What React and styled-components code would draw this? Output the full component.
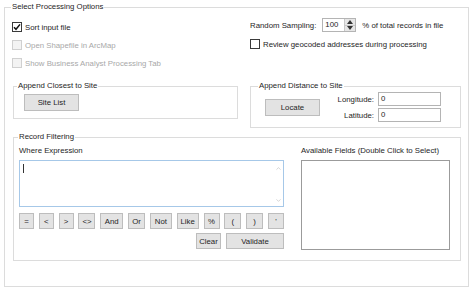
import React from 'react';
import styled, { createGlobalStyle } from 'styled-components';
import { ChevronUp, ChevronDown } from 'lucide-react';

const GlobalStyle = createGlobalStyle`
  html, body {
    margin: 0;
    background: #fff;
  }
  body {
    font-family: "Liberation Sans", Arial, sans-serif;
    font-size: 7.8px;
    color: #1e1e1e;
  }
`;

const Page = styled.div`
  width: 474px;
  height: 289px;
  padding: 2px 0 0 4px;
  box-sizing: border-box;
  overflow: hidden;
`;

const Group = styled.fieldset`
  margin: 0;
  padding: 0;
  border: 1px solid #dcdcdc;
  min-width: 0;
  box-sizing: border-box;
  width: ${p => p.$w}px;
  height: ${p => (p.$h ? `${p.$h}px` : 'auto')};
`;

const Legend = styled.legend`
  padding: 0 1px;
  margin-left: ${p => p.$offset}px;
  line-height: 10px;
  font-size: 7.8px;
  color: #1e1e1e;
`;

const GroupBody = styled.div`
  padding: ${p => p.$pad};
`;

const TopSection = styled.div`
  display: grid;
  grid-template-columns: 237px 1fr;
  height: 69px;
`;

const Column = styled.div`
  display: flex;
  flex-direction: column;
  gap: ${p => p.$gap || 0}px;
  padding-top: ${p => p.$top}px;
  margin-left: ${p => p.$left || 0}px;
`;

const Row = styled.label`
  display: flex;
  align-items: center;
  height: 18px;
  gap: ${p => p.$gap || 3}px;
  color: ${p => (p.$disabled ? '#a8a8a8' : '#1e1e1e')};
  white-space: nowrap;
`;

const Box = styled.span`
  width: 10px;
  height: 10px;
  box-sizing: border-box;
  border: 1px solid ${p => (p.$disabled ? '#d0d0d0' : '#3a3a3a')};
  background: ${p => (p.$disabled ? '#f3f3f3' : '#fff')};
  display: flex;
  align-items: center;
  justify-content: center;
`;

const CheckBox = ({ checked, disabled }) => (
  <Box $disabled={disabled}>
    {checked && (
      <svg width="8" height="8" viewBox="0 0 8 8">
        <path d="M1 4.2 L3 6.3 L7 1.4" fill="none" stroke="#111" strokeWidth="1.5" />
      </svg>
    )}
  </Box>
);

const Spin = styled.div`
  display: flex;
  width: 34px;
  height: 14px;
  box-sizing: border-box;
  border: 1px solid #b4b4b4;
  margin: 0 3px 0 3px;
`;

const SpinValue = styled.span`
  flex: 1;
  padding-left: 2px;
  line-height: 12px;
`;

const SpinArrows = styled.span`
  width: 10px;
  display: flex;
  flex-direction: column;
  background: #e6e6e6;
  border-left: 1px solid #c8c8c8;
`;

const Arrow = styled.span`
  flex: 1;
  display: flex;
  align-items: center;
  justify-content: center;
  border-bottom: ${p => (p.$top ? '1px solid #c8c8c8' : 'none')};
`;

const GroupsRow = styled.div`
  display: flex;
  align-items: flex-start;
  gap: 12px;
`;

const Button = styled.button`
  width: ${p => p.$w}px;
  height: ${p => p.$h || 16}px;
  padding: 0;
  box-sizing: border-box;
  border: 1px solid #bdbdbd;
  background: #e3e3e3;
  font-family: inherit;
  font-size: 7.8px;
  color: #1e1e1e;
  flex: none;
`;

const DistanceBody = styled.div`
  display: flex;
  align-items: center;
  padding: 1px 0 5px 14px;
`;

const CoordGrid = styled.div`
  display: grid;
  grid-template-columns: 52px 63px;
  column-gap: 4px;
  row-gap: 2px;
  margin-left: 2px;
  align-items: center;
`;

const CoordLabel = styled.span`
  text-align: right;
`;

const TextField = styled.div`
  height: 14px;
  box-sizing: border-box;
  border: 1px solid #b4b4b4;
  padding-left: 2px;
  line-height: 12px;
`;

const FilterBody = styled.div`
  display: flex;
  gap: 17px;
  padding: 4px 10px 10px 5px;
`;

const FieldLabel = styled.div`
  line-height: 10px;
  margin-bottom: 4px;
  white-space: nowrap;
`;

const ExprBox = styled.div`
  display: flex;
  height: 47px;
  box-sizing: border-box;
  border: 1px solid #a6c8e8;
  background: #fff;
`;

const ExprText = styled.div`
  flex: 1;
  padding: 3px 0 0 3px;
`;

const Caret = styled.span`
  display: block;
  width: 1px;
  height: 9px;
  background: #333;
`;

const ScrollBar = styled.div`
  width: 10px;
  display: flex;
  flex-direction: column;
  justify-content: space-between;
  align-items: center;
  padding: 4px 0 2px;
  color: #b8b8b8;
`;

const OperatorRow = styled.div`
  display: flex;
  justify-content: space-between;
  margin-top: 6px;
`;

const ActionRow = styled.div`
  display: flex;
  justify-content: flex-end;
  gap: 5px;
  margin-top: 4px;
`;

const ListBox = styled.div`
  width: 149px;
  height: 90px;
  box-sizing: border-box;
  border: 1px solid #9b9b9b;
  background: #fff;
`;

const operators = [
  ['=', 15], ['<', 15], ['>', 15], ['<>', 17], ['And', 23], ['Or', 17],
  ['Not', 22], ['Like', 22], ['%', 16], ['(', 17], [')', 17], ["'", 16],
];

export default function App() {
  return (
    <Page>
      <GlobalStyle />
      <Group $w={465} $h={285}>
        <Legend $offset={6}>Select Processing Options</Legend>
        <GroupBody $pad="0 0 0 8px">
          <TopSection>
            <Column $top={6} $left={-1}>
              <Row>
                <CheckBox checked />
                Sort input file
              </Row>
              <Row $disabled>
                <CheckBox disabled />
                Open Shapefile in ArcMap
              </Row>
              <Row $disabled>
                <CheckBox disabled />
                Show Business Analyst Processing Tab
              </Row>
            </Column>
            <Column $top={4} $gap={1}>
              <Row $gap={0}>
                Random Sampling:
                <Spin>
                  <SpinValue>100</SpinValue>
                  <SpinArrows>
                    <Arrow $top>
                      <svg width="6" height="4" viewBox="0 0 6 4"><path d="M0 4 L3 0 L6 4 Z" fill="#333" /></svg>
                    </Arrow>
                    <Arrow>
                      <svg width="6" height="4" viewBox="0 0 6 4"><path d="M0 0 L3 4 L6 0 Z" fill="#333" /></svg>
                    </Arrow>
                  </SpinArrows>
                </Spin>
                % of total records in file
              </Row>
              <Row>
                <CheckBox />
                Review geocoded addresses during processing
              </Row>
            </Column>
          </TopSection>

          <GroupsRow>
            <Group $w={225}>
              <Legend $offset={3}>Append Closest to Site</Legend>
              <GroupBody $pad="3px 0 7px 10px">
                <Button $w={55} $h={17}>Site List</Button>
              </GroupBody>
            </Group>
            <Group $w={211}>
              <Legend $offset={7}>Append Distance to Site</Legend>
              <DistanceBody>
                <Button $w={55} $h={17}>Locate</Button>
                <CoordGrid>
                  <CoordLabel>Longitude:</CoordLabel>
                  <TextField>0</TextField>
                  <CoordLabel>Latitude:</CoordLabel>
                  <TextField>0</TextField>
                </CoordGrid>
              </DistanceBody>
            </Group>
          </GroupsRow>

          <Group $w={448} style={{ marginTop: 4 }}>
            <Legend $offset={4}>Record Filtering</Legend>
            <FilterBody>
              <div style={{ width: 265 }}>
                <FieldLabel>Where Expression</FieldLabel>
                <ExprBox>
                  <ExprText>
                    <Caret />
                  </ExprText>
                  <ScrollBar>
                    <ChevronUp size={7} strokeWidth={2} />
                    <ChevronDown size={7} strokeWidth={2} />
                  </ScrollBar>
                </ExprBox>
                <OperatorRow>
                  {operators.map(([label, w]) => (
                    <Button key={label} $w={w}>{label}</Button>
                  ))}
                </OperatorRow>
                <ActionRow>
                  <Button $w={25}>Clear</Button>
                  <Button $w={58}>Validate</Button>
                </ActionRow>
              </div>
              <div>
                <FieldLabel>Available Fields (Double Click to Select)</FieldLabel>
                <ListBox />
              </div>
            </FilterBody>
          </Group>
        </GroupBody>
      </Group>
    </Page>
  );
}
